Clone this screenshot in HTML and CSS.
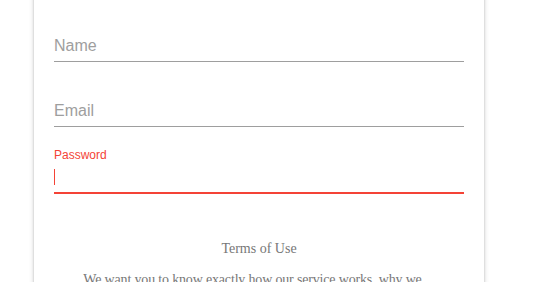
FILE: index.html
```html
<!DOCTYPE html>
<html>
<head>
<meta charset="utf-8">
<link rel="stylesheet" href="styles.css">
</head>
<body>
<div class="card">
  <form class="form">
    <div class="field">
      <div class="label"></div>
      <div class="input"><span class="placeholder">Name</span></div>
    </div>
    <div class="field">
      <div class="label"></div>
      <div class="input"><span class="placeholder">Email</span></div>
    </div>
    <div class="field field-active">
      <div class="label">Password</div>
      <div class="input input-active"><span class="caret"></span></div>
    </div>
  </form>
  <div class="terms">
    <h4 class="terms-title">Terms of Use</h4>
    <p class="terms-text">We want you to know exactly how our service works, why we need your registration details and how we use them.</p>
  </div>
</div>
</body>
</html>
```
FILE: styles.css
```css
html, body {
  margin: 0;
  padding: 0;
  background: #fff;
}
body {
  padding-left: 34px;
}
.card {
  width: 450px;
  box-sizing: border-box;
  margin-top: -10px;
  padding: 27px 20px 40px;
  background: #fff;
  box-shadow: 0 2px 2px 0 rgba(0,0,0,.14), 0 3px 1px -2px rgba(0,0,0,.12), 0 1px 5px 0 rgba(0,0,0,.2);
}
.form {
  display: flex;
  flex-direction: column;
  gap: 20px;
  font-family: "Liberation Sans", Arial, sans-serif;
}
.field-active {
  margin-top: 1px;
}
.label {
  height: 13px;
  line-height: 15px;
  font-size: 12px;
  color: #f44336;
}
.input {
  height: 31px;
  line-height: 31px;
  font-size: 16px;
  border-bottom: 1px solid #9e9e9e;
}
.input-active {
  border-bottom: 2px solid #f44336;
}
.placeholder {
  color: #9e9e9e;
}
.caret {
  display: inline-block;
  width: 1px;
  height: 16px;
  background: #f44336;
  vertical-align: -3px;
}
.terms {
  margin-top: 47px;
  font-family: "Liberation Serif", "Times New Roman", serif;
  color: #777;
  text-align: center;
  font-size: 14px;
}
.terms-title {
  margin: 0;
  font-size: 14px;
  font-weight: normal;
  line-height: 15px;
}
.terms-text {
  margin: 16px 0 0;
  padding: 0 28px 0 15px;
  line-height: 15px;
  letter-spacing: -0.17px;
}
```
